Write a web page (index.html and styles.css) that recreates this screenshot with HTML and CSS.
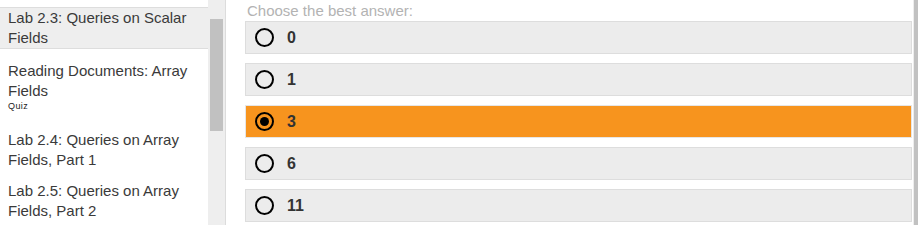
FILE: index.html
```html
<!DOCTYPE html>
<html>
<head>
<meta charset="utf-8">
<link rel="stylesheet" href="styles.css">
</head>
<body>
<div class="page">
  <nav class="sidebar">
    <div class="item active">Lab 2.3: Queries on Scalar Fields</div>
    <div class="item item-2">Reading Documents: Array Fields<div class="sub">Quiz</div></div>
    <div class="item item-3">Lab 2.4: Queries on Array Fields, Part 1</div>
    <div class="item item-4">Lab 2.5: Queries on Array Fields, Part 2</div>
  </nav>
  <div class="side-scroll"><div class="side-thumb"></div></div>
  <main class="main">
    <div class="prompt">Choose the best answer:</div>
    <div class="option"><span class="radio"></span><span class="label">0</span></div>
    <div class="option"><span class="radio"></span><span class="label">1</span></div>
    <div class="option selected"><span class="radio checked"></span><span class="label">3</span></div>
    <div class="option"><span class="radio"></span><span class="label">6</span></div>
    <div class="option"><span class="radio"></span><span class="label">11</span></div>
  </main>
  <div class="page-scroll"></div>
</div>
</body>
</html>
```
FILE: styles.css
```css
html, body {
  margin: 0;
  padding: 0;
  background: #fff;
}
body {
  font-family: "Liberation Sans", Arial, sans-serif;
  overflow: hidden;
}
.page {
  display: flex;
  height: 225px;
  overflow: hidden;
}
.sidebar {
  width: 208px;
  flex: none;
  padding-top: 7px;
  box-sizing: border-box;
}
.item {
  padding: 0 8px;
  font-size: 15px;
  line-height: 20px;
  color: #3a3a3a;
}
.item.active {
  background: #eeeeee;
  border-top: 1px solid #dddddd;
  border-bottom: 1px solid #dddddd;
}
.item-2 { margin-top: 12px; }
.item-3 { margin-top: 19px; }
.item-4 { margin-top: 11px; }
.sub {
  font-size: 9px;
  line-height: 10px;
  letter-spacing: 0.4px;
  color: #222;
}
.side-scroll {
  width: 17px;
  flex: none;
  background: #eeeeee;
  border-right: 1px solid #dcdcdc;
}
.side-thumb {
  margin: 19px 2px 0 2px;
  height: 112px;
  background: #c1c1c1;
}
.main {
  flex: 1;
  padding: 0 1px 0 19px;
  min-width: 0;
}
.prompt {
  padding-top: 1px;
  padding-left: 2px;
  font-size: 15px;
  line-height: 20px;
  color: #b3b3b3;
}
.option {
  display: flex;
  align-items: center;
  height: 33px;
  box-sizing: border-box;
  margin-bottom: 9px;
  padding-left: 9px;
  background: #ececec;
  border: 1px solid #dddddd;
}
.option.selected {
  background: #f7941e;
  border-color: #e6e6e6;
}
.radio {
  width: 19px;
  height: 19px;
  box-sizing: border-box;
  border: 2px solid #000;
  border-radius: 50%;
  display: flex;
  align-items: center;
  justify-content: center;
  flex: none;
}
.radio.checked::after {
  content: "";
  width: 9px;
  height: 9px;
  border-radius: 50%;
  background: #000;
}
.label {
  margin-left: 13px;
  font-size: 16px;
  font-weight: bold;
  color: #333;
}
.page-scroll {
  width: 5px;
  flex: none;
  box-sizing: border-box;
  border-left: 1px solid #ededed;
  background: #c1c1c1;
}
```
